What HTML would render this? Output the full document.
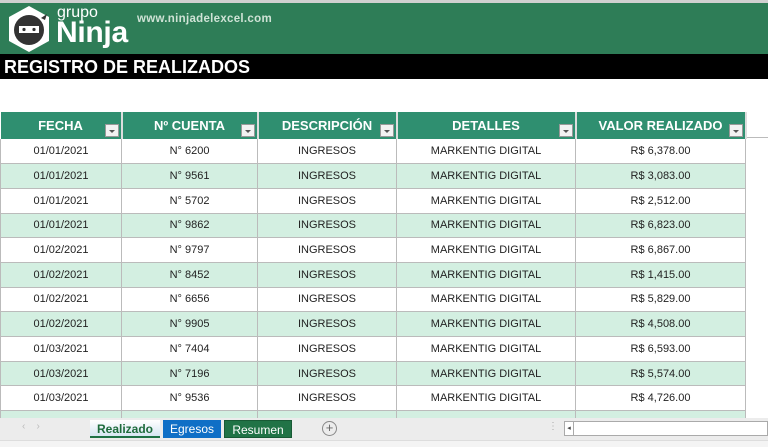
<!DOCTYPE html><html><head><meta charset="utf-8"><style>
*{margin:0;padding:0;box-sizing:border-box}
body{width:768px;height:447px;overflow:hidden;background:#fff;font-family:"Liberation Sans",sans-serif;position:relative}
.top{position:absolute;left:0;top:0;width:768px;height:3px;background:#d0d0d0}
.banner{position:absolute;left:0;top:3px;width:768px;height:51px;background:#2e7d57}
.black{position:absolute;left:0;top:54px;width:768px;height:25px;background:#000;color:#fff;font-weight:bold;font-size:18px;line-height:26px;padding-left:4px}
table{position:absolute;left:0;top:112px;border-collapse:collapse;font-size:11px;color:#222}
th{background:#2f8f70;color:#fff;font-size:13px;height:27px;font-weight:bold;position:relative;border-right:2px solid #ddd}
td{height:24.7px;text-align:center;border:1px solid #bbb;border-top:none}
tr:nth-child(odd) td{background:#d3efe1}
.dd{position:absolute;right:2px;bottom:2px;width:14px;height:13px;background:#f2f2f2;border:1px solid #999}
.dd:after{content:"";position:absolute;left:3px;top:5px;border:3px solid transparent;border-top:3px solid #555}
.tabs{position:absolute;left:0;top:418px;width:768px;height:22px;background:#ececec}
.tab{position:absolute;top:2px;height:18px;font-size:12px;line-height:18px;text-align:center}
.bot{position:absolute;left:0;top:440px;width:768px;height:7px;background:#f4f4f4;border-top:1px solid #ddd}
</style></head><body>
<div class="top"></div>
<div class="banner">
<svg style="position:absolute;left:5px;top:2px" width="48" height="48" viewBox="0 0 48 48"><polygon points="24,1 44,12 44,36 24,47 4,36 4,12" fill="#fff"/><circle cx="24" cy="25" r="15" fill="#333"/><rect x="14" y="21" width="20" height="7" fill="#fff"/><circle cx="19" cy="24.5" r="1.6" fill="#333"/><circle cx="29" cy="24.5" r="1.6" fill="#333"/><path d="M36 13l6-4-2 6z" fill="#333"/></svg>
<div style="position:absolute;left:57px;top:1px;color:#fff;font-size:16px">grupo</div>
<div style="position:absolute;left:56px;top:13px;color:#fff;font-size:30px;font-weight:bold;letter-spacing:-0.3px">Ninja</div>
<div style="position:absolute;left:137px;top:10px;color:#cfe3d6;font-size:11.5px;font-weight:bold;letter-spacing:0.3px">www.ninjadelexcel.com</div>
</div>
<div class="black">REGISTRO DE REALIZADOS</div>
<div style="position:absolute;left:745px;top:137px;width:23px;height:1px;background:#bbb"></div>
<table>
<tr><th style="width:121px">FECHA<span class="dd"></span></th><th style="width:136px">Nº CUENTA<span class="dd"></span></th><th style="width:139px">DESCRIPCIÓN<span class="dd"></span></th><th style="width:179px">DETALLES<span class="dd"></span></th><th style="width:170px">VALOR REALIZADO<span class="dd"></span></th></tr>
<tr><td>01/01/2021</td><td>N° 6200</td><td>INGRESOS</td><td>MARKENTIG DIGITAL</td><td>R$ 6,378.00</td></tr>
<tr><td>01/01/2021</td><td>N° 9561</td><td>INGRESOS</td><td>MARKENTIG DIGITAL</td><td>R$ 3,083.00</td></tr>
<tr><td>01/01/2021</td><td>N° 5702</td><td>INGRESOS</td><td>MARKENTIG DIGITAL</td><td>R$ 2,512.00</td></tr>
<tr><td>01/01/2021</td><td>N° 9862</td><td>INGRESOS</td><td>MARKENTIG DIGITAL</td><td>R$ 6,823.00</td></tr>
<tr><td>01/02/2021</td><td>N° 9797</td><td>INGRESOS</td><td>MARKENTIG DIGITAL</td><td>R$ 6,867.00</td></tr>
<tr><td>01/02/2021</td><td>N° 8452</td><td>INGRESOS</td><td>MARKENTIG DIGITAL</td><td>R$ 1,415.00</td></tr>
<tr><td>01/02/2021</td><td>N° 6656</td><td>INGRESOS</td><td>MARKENTIG DIGITAL</td><td>R$ 5,829.00</td></tr>
<tr><td>01/02/2021</td><td>N° 9905</td><td>INGRESOS</td><td>MARKENTIG DIGITAL</td><td>R$ 4,508.00</td></tr>
<tr><td>01/03/2021</td><td>N° 7404</td><td>INGRESOS</td><td>MARKENTIG DIGITAL</td><td>R$ 6,593.00</td></tr>
<tr><td>01/03/2021</td><td>N° 7196</td><td>INGRESOS</td><td>MARKENTIG DIGITAL</td><td>R$ 5,574.00</td></tr>
<tr><td>01/03/2021</td><td>N° 9536</td><td>INGRESOS</td><td>MARKENTIG DIGITAL</td><td>R$ 4,726.00</td></tr>
<tr><td></td><td></td><td></td><td></td><td></td></tr>
</table>
<div class="tabs">
<span style="position:absolute;left:22px;top:3px;color:#bbb;font-size:10px">‹ &nbsp;&nbsp; ›</span>
<div class="tab" style="left:90px;width:70px;background:linear-gradient(#fff,#d6e6f2);color:#1e6b3c;font-weight:bold;border-bottom:2px solid #1e7145">Realizado</div>
<div class="tab" style="left:163px;width:58px;background:#0f6fc6;color:#fff">Egresos</div>
<div class="tab" style="left:224px;width:68px;background:#217346;color:#fff;border:1px solid #185a35">Resumen</div>
<div style="position:absolute;left:322px;top:3px;width:15px;height:15px;border:1px solid #888;border-radius:50%;color:#666;font-size:13px;line-height:12px;text-align:center">+</div>
<span style="position:absolute;left:548px;top:3px;color:#aaa;font-size:10px">⋮</span>
<div style="position:absolute;left:564px;top:3px;width:204px;height:15px;background:#fff;border:1px solid #aaa"><div style="width:9px;height:13px;border-right:1px solid #aaa;font-size:7px;line-height:13px;color:#444;text-align:center">◂</div></div>
</div>
<div class="bot"></div>
</body></html>
